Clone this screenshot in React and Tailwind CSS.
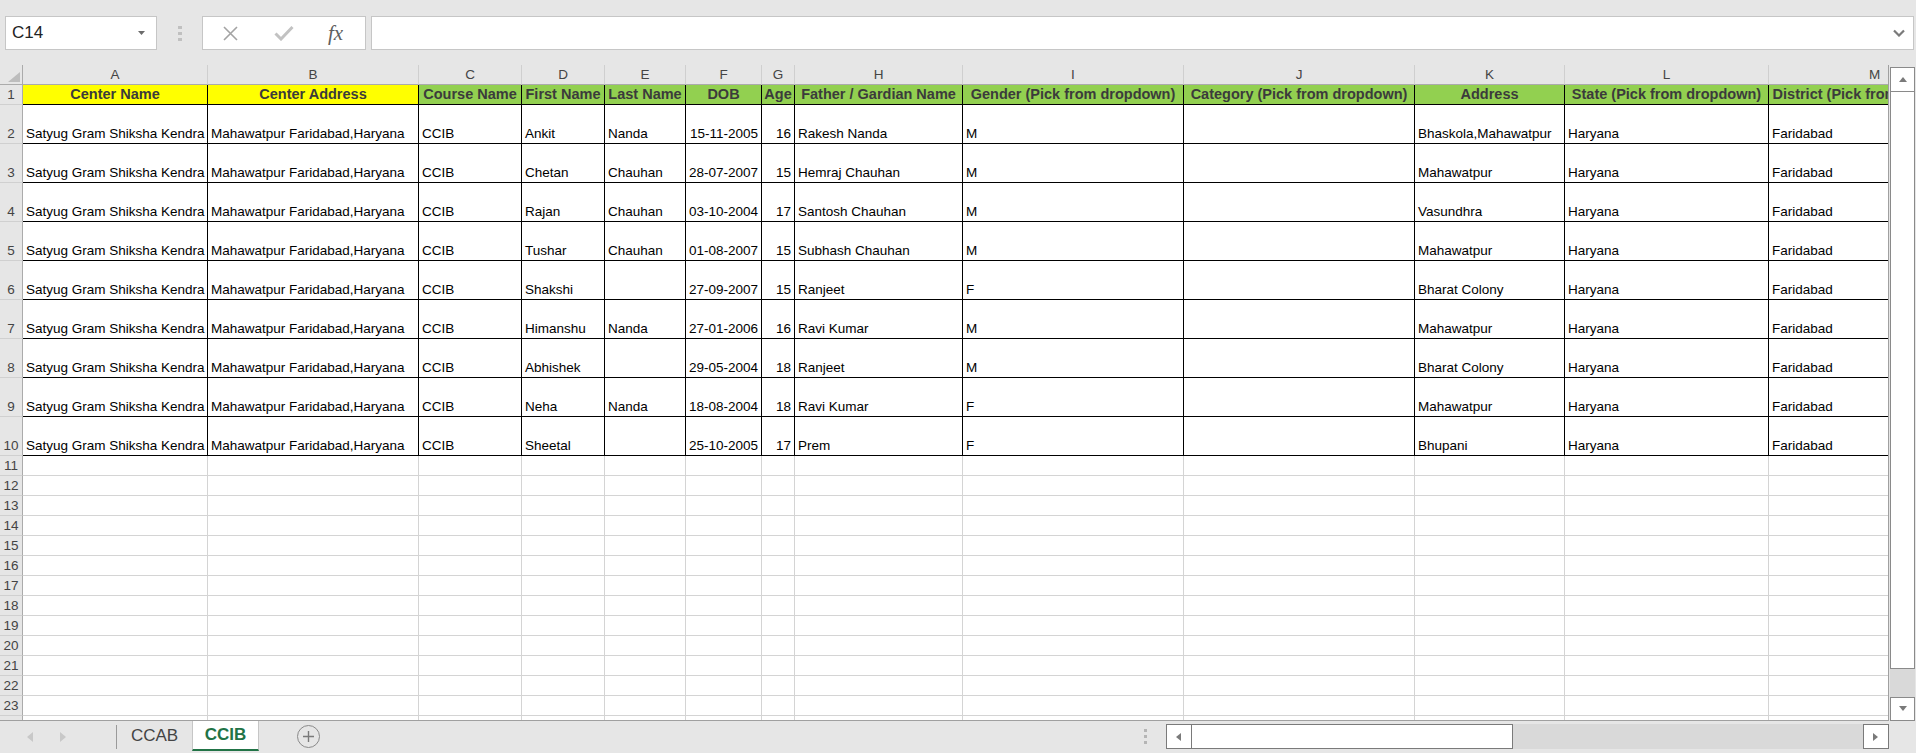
import React from "react";

const columns = [
  { letter: "A", w: "w-[185px]", title: "Center Name", bg: "bg-[#ffff00]" },
  { letter: "B", w: "w-[211px]", title: "Center Address", bg: "bg-[#ffff00]" },
  { letter: "C", w: "w-[103px]", title: "Course Name", bg: "bg-[#92d050]" },
  { letter: "D", w: "w-[83px]", title: "First Name", bg: "bg-[#92d050]" },
  { letter: "E", w: "w-[81px]", title: "Last Name", bg: "bg-[#92d050]" },
  { letter: "F", w: "w-[76px]", title: "DOB", bg: "bg-[#92d050]", right: true },
  { letter: "G", w: "w-[33px]", title: "Age", bg: "bg-[#92d050]", right: true },
  { letter: "H", w: "w-[168px]", title: "Father / Gardian Name", bg: "bg-[#92d050]" },
  { letter: "I", w: "w-[221px]", title: "Gender (Pick from dropdown)", bg: "bg-[#92d050]" },
  { letter: "J", w: "w-[231px]", title: "Category (Pick from dropdown)", bg: "bg-[#92d050]" },
  { letter: "K", w: "w-[150px]", title: "Address", bg: "bg-[#92d050]" },
  { letter: "L", w: "w-[204px]", title: "State (Pick from dropdown)", bg: "bg-[#92d050]" },
  { letter: "M", w: "w-[212px]", title: "District (Pick from dropdown)", bg: "bg-[#92d050]" },
];

const center = "Satyug Gram Shiksha Kendra";
const addr = "Mahawatpur Faridabad,Haryana";

// one entry per student row (rows 2-10)
const students = [
  ["Ankit", "Nanda", "15-11-2005", "16", "Rakesh Nanda", "M", "Bhaskola,Mahawatpur"],
  ["Chetan", "Chauhan", "28-07-2007", "15", "Hemraj Chauhan", "M", "Mahawatpur"],
  ["Rajan", "Chauhan", "03-10-2004", "17", "Santosh Chauhan", "M", "Vasundhra"],
  ["Tushar", "Chauhan", "01-08-2007", "15", "Subhash Chauhan", "M", "Mahawatpur"],
  ["Shakshi", "", "27-09-2007", "15", "Ranjeet", "F", "Bharat Colony"],
  ["Himanshu", "Nanda", "27-01-2006", "16", "Ravi Kumar", "M", "Mahawatpur"],
  ["Abhishek", "", "29-05-2004", "18", "Ranjeet", "M", "Bharat Colony"],
  ["Neha", "Nanda", "18-08-2004", "18", "Ravi Kumar", "F", "Mahawatpur"],
  ["Sheetal", "", "25-10-2005", "17", "Prem", "F", "Bhupani"],
];

const dataRows = students.map((s) => [
  center, addr, "CCIB", s[0], s[1], s[2], s[3], s[4], s[5], "", s[6], "Haryana", "Faridabad",
]);

// row 24 only peeks out under row 23, so no number is shown
const emptyRows = [11, 12, 13, 14, 15, 16, 17, 18, 19, 20, 21, 22, 23, ""];

const RowNum = ({ n, h }) => (
  <div className={`w-[23px] ${h} shrink-0 bg-[#e6e6e6] border-r border-b border-r-[#ababab] border-b-[#d0d0d0] flex items-end justify-center text-[13.5px] leading-[18px] text-[#444]`}>
    {n}
  </div>
);

const Arrow = ({ dir }) => {
  const pts = {
    up: "1,7 5,2 9,7",
    down: "1,2 5,7 9,2",
    left: "7,1 2,5 7,9",
    right: "2,1 7,5 2,9",
  };
  return (
    <svg width="10" height="10" viewBox="0 0 10 10">
      <polygon points={pts[dir]} fill="#7a7a7a" />
    </svg>
  );
};

const App = () => {
  return (
    <div className="w-[1916px] h-[753px] bg-[#e6e6e6] flex flex-col overflow-hidden font-['Liberation_Sans',Arial,sans-serif] text-black">
      {/* formula bar */}
      <div className="h-[65px] shrink-0 flex pt-[16px] pb-[15px]">
        <div className="ml-[5px] w-[152px] h-[34px] bg-white border border-[#c6c6c6] flex items-center pl-[6px] pr-[11px]">
          <span className="text-[17px] text-[#222] flex-1">C14</span>
          <svg width="7" height="4" viewBox="0 0 7 4">
            <polygon points="0,0 7,0 3.5,4" fill="#6b6b6b" />
          </svg>
        </div>
        <div className="w-[45px] flex flex-col items-center justify-center gap-[3px]">
          <div className="w-[4px] h-[3px] bg-[#c0c0c0]" />
          <div className="w-[4px] h-[3px] bg-[#c0c0c0]" />
          <div className="w-[4px] h-[3px] bg-[#c0c0c0]" />
        </div>
        <div className="w-[164px] h-[34px] bg-white border border-[#c6c6c6] flex items-center">
          <svg className="ml-[19px]" width="17" height="17" viewBox="0 0 17 17">
            <path d="M2 2 L15 15 M15 2 L2 15" stroke="#a3a3a3" strokeWidth="1.6" />
          </svg>
          <svg className="ml-[35px]" width="20" height="16" viewBox="0 0 20 16">
            <path d="M1.5 8.5 L7 14 L18.5 2" stroke="#c2c2c2" strokeWidth="3" fill="none" />
          </svg>
          <span className="ml-[34px] font-['Liberation_Serif',serif] italic text-[21px] text-[#5f5f5f] leading-none">fx</span>
        </div>
        <div className="ml-[5px] flex-1 mr-[2px] h-[34px] bg-white border border-[#c6c6c6] flex items-center justify-end pr-[8px]">
          <svg width="12" height="8" viewBox="0 0 12 8">
            <path d="M1 1.5 L6 6.5 L11 1.5" stroke="#7a7a7a" strokeWidth="2.2" fill="none" />
          </svg>
        </div>
      </div>

      {/* sheet area */}
      <div className="h-[656px] shrink-0 flex">
        <div className="w-[1889px] shrink-0 overflow-hidden bg-white border-r border-b border-[#a0a0a0]">
          {/* column letters */}
          <div className="flex w-max">
            <div className="w-[23px] h-[20px] shrink-0 bg-[#e6e6e6] border-r border-b border-[#ababab] flex items-end justify-end">
              <svg width="16" height="13" viewBox="0 0 16 13">
                <polygon points="2,11 14,11 14,1" fill="#bdbdbd" />
              </svg>
            </div>
            {columns.map((c) => (
              <div key={c.letter} className={`${c.w} h-[20px] shrink-0 bg-[#e6e6e6] border-r border-b border-r-[#cfcfcf] border-b-[#ababab] text-center text-[13.5px] leading-[19px] text-[#444]`}>
                {c.letter}
              </div>
            ))}
          </div>

          {/* row 1 titles */}
          <div className="flex w-max">
            <RowNum n={1} h="h-[20px]" />
            {columns.map((c) => (
              <div key={c.letter} className={`${c.w} ${c.bg} h-[20px] shrink-0 border-r border-b border-black overflow-hidden whitespace-nowrap text-center font-bold text-[14.5px] leading-[19px] text-[#3b3b3b]`}>
                {c.title}
              </div>
            ))}
          </div>

          {/* student rows */}
          {dataRows.map((row, i) => (
            <div key={i} className="flex w-max">
              <RowNum n={i + 2} h="h-[39px]" />
              {columns.map((c, j) => (
                <div key={c.letter} className={`${c.w} h-[39px] shrink-0 border-r border-b border-black overflow-hidden whitespace-nowrap flex items-end px-[3px] text-[13.5px] leading-[18px] ${c.right ? "justify-end" : "justify-start"}`}>
                  {row[j]}
                </div>
              ))}
            </div>
          ))}

          {/* empty rows */}
          {emptyRows.map((n, i) => (
            <div key={i} className="flex w-max">
              <RowNum n={n} h="h-[20px]" />
              {columns.map((c) => (
                <div key={c.letter} className={`${c.w} h-[20px] shrink-0 border-r border-b border-[#d4d4d4]`} />
              ))}
            </div>
          ))}
        </div>

        {/* vertical scrollbar */}
        <div className="w-[27px] shrink-0 flex flex-col pt-[2px] pl-[1px]">
          <div className="w-[25px] h-[25px] bg-white border border-[#8a8a8a] flex items-center justify-center">
            <Arrow dir="up" />
          </div>
          <div className="w-[25px] h-[578px] -mt-px bg-white border border-[#8a8a8a]" />
          <div className="w-[25px] h-[28px] bg-[#d9d9d9]" />
          <div className="w-[25px] h-[24px] bg-white border border-[#8a8a8a] flex items-center justify-center">
            <Arrow dir="down" />
          </div>
        </div>
      </div>

      {/* sheet tabs */}
      <div className="h-[32px] shrink-0 flex">
        <div className="w-[116px] flex items-center">
          <svg className="ml-[26px]" width="8" height="12" viewBox="0 0 8 12">
            <polygon points="7,1 1,6 7,11" fill="#c8c8c8" />
          </svg>
          <svg className="ml-[25px]" width="8" height="12" viewBox="0 0 8 12">
            <polygon points="1,1 7,6 1,11" fill="#c8c8c8" />
          </svg>
        </div>
        <div className="w-px h-[24px] mt-[4px] bg-[#9a9a9a]" />
        <div className="w-[75px] flex items-center justify-center text-[17px] text-[#444] pb-[2px]">CCAB</div>
        <div className="w-[67px] h-[30px] bg-white border-x border-[#c6c6c6] border-b-2 border-b-[#217346] flex items-center justify-center font-bold text-[17px] text-[#217346]">
          CCIB
        </div>
        <div className="ml-[38px] flex items-center pb-[2px]">
          <div className="w-[23px] h-[23px] rounded-full border border-[#8a8a8a] flex items-center justify-center">
            <svg width="13" height="13" viewBox="0 0 13 13">
              <path d="M6.5 1 V12 M1 6.5 H12" stroke="#7a7a7a" strokeWidth="1.4" />
            </svg>
          </div>
        </div>
        <div className="flex-1" />
        <div className="w-[22px] flex flex-col justify-center gap-[3px] pb-[2px]">
          <div className="w-[3px] h-[3px] bg-[#b5b5b5]" />
          <div className="w-[3px] h-[3px] bg-[#b5b5b5]" />
          <div className="w-[3px] h-[3px] bg-[#b5b5b5]" />
        </div>
        <div className="w-[723px] h-[25px] mt-[3px] flex">
          <div className="w-[26px] h-[25px] bg-white border border-[#7a7a7a] flex items-center justify-center">
            <Arrow dir="left" />
          </div>
          <div className="w-[322px] h-[25px] -ml-px bg-white border border-[#7a7a7a]" />
          <div className="flex-1 h-[25px] bg-[#d9d9d9]" />
          <div className="w-[26px] h-[25px] bg-white border border-[#7a7a7a] flex items-center justify-center">
            <Arrow dir="right" />
          </div>
        </div>
        <div className="w-[27px]" />
      </div>
    </div>
  );
};

export default App;
